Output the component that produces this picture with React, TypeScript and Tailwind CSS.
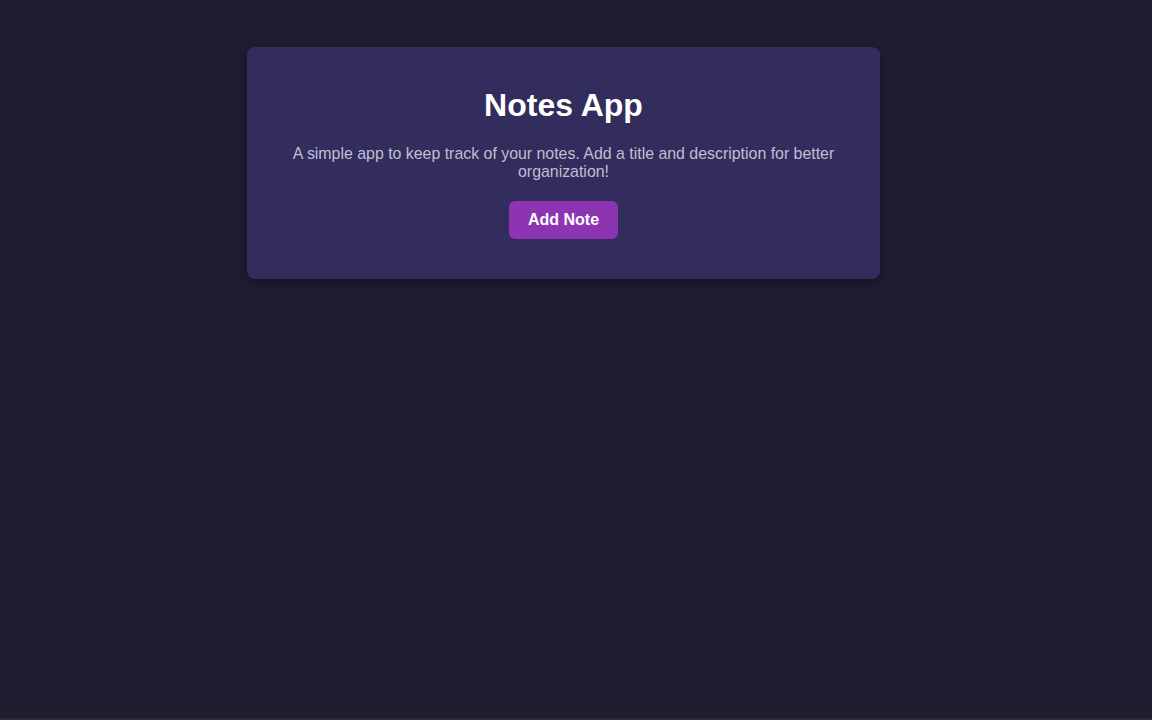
export default function App() {
  return (
    <div className="h-[720px] bg-[#1f1d30] border-b-2 border-[#2d2c34] font-['Liberation_Sans',Arial,sans-serif]">
      <div className="flex justify-center pt-[47px] pr-[25px]">
        <div className="w-[633px] rounded-lg bg-[#332d5d] px-10 py-10 text-center shadow-[0_4px_12px_rgba(0,0,0,0.35)]">
          <h1 className="text-[32px] font-bold leading-[37px] text-white">Notes App</h1>
          <p className="mt-[21px] text-[15.9px] leading-[18px] text-[#c2bed2]">
            A simple app to keep track of your notes. Add a title and description for better organization!
          </p>
          <button
            type="button"
            className="mt-5 h-[38px] rounded-md bg-[#8c34b1] px-[19px] text-base font-bold text-white"
          >
            Add Note
          </button>
        </div>
      </div>
    </div>
  )
}
